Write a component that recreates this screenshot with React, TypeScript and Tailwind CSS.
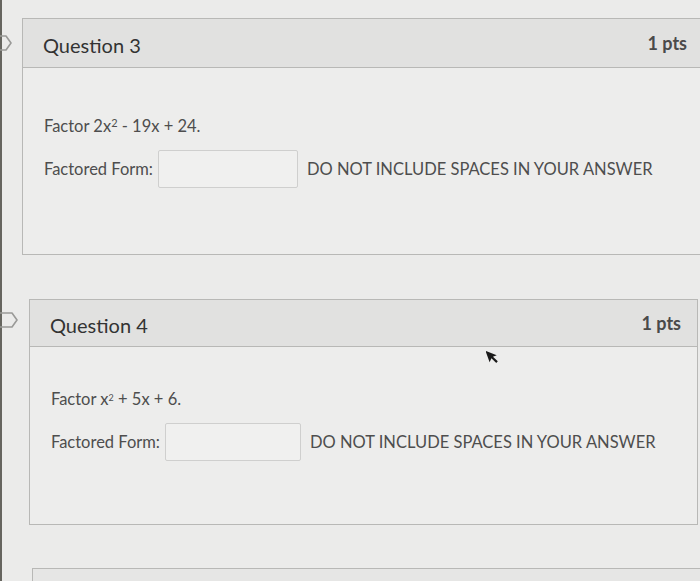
import { ReactNode } from "react";

// Small outline "flag" tag that sits in the left gutter of each question
function FlagTag() {
  return (
    <svg width="20" height="18" viewBox="0 0 20 18" fill="none" className="shrink-0">
      <path
        d="M-4 2 H12 L17 9 L12 16 H-4"
        stroke="#9a9a98"
        strokeWidth="1.6"
        strokeLinejoin="round"
      />
    </svg>
  );
}

interface QuestionProps {
  title: string;
  prompt: ReactNode;
  offset: string;
  cardWidth: string;
  headerH: string;
  headerPr: string;
  bodyH: string;
  bodyPt: string;
  inputW: string;
  flagTop: string;
}

function Question({
  title,
  prompt,
  offset,
  cardWidth,
  headerH,
  headerPr,
  bodyH,
  bodyPt,
  inputW,
  flagTop,
}: QuestionProps) {
  return (
    <div className="flex shrink-0">
      <div className={`${offset} shrink-0 flex flex-col`}>
        <div className={flagTop}>
          <FlagTag />
        </div>
      </div>
      <div className={`${cardWidth} shrink-0 border border-[#b8b8b6] bg-[#ededec]`}>
        <div
          className={`${headerH} ${headerPr} flex items-center justify-between pl-[20px] bg-[#e1e1e0] border-b border-[#b8b8b6]`}
        >
          <span className="text-[20px] text-[#333] mt-[4px]">{title}</span>
          <span className="text-[18px] font-bold text-[#4a4a4a]">1 pts</span>
        </div>
        <div className={`${bodyH} ${bodyPt} pl-[21px] text-[16.5px] text-[#4e4e4e]`}>
          <div className="leading-[20px]">{prompt}</div>
          <div className="flex items-center mt-[14px]">
            <span>Factored Form:</span>
            <div className={`${inputW} h-[38px] ml-[5px] mr-[9px] border border-[#cfcfce] bg-[#f0f0ef] rounded-[2px]`} />
            <span>DO NOT INCLUDE SPACES IN YOUR ANSWER</span>
          </div>
        </div>
      </div>
    </div>
  );
}

export default function App() {
  return (
    <div
      className="relative w-[700px] h-[581px] overflow-hidden bg-[#ebebea] flex"
      style={{ fontFamily: "Lato, 'Open Sans', sans-serif" }}
    >
      <div className="w-[2px] shrink-0 bg-[#66655f]" />
      <div className="flex-1 flex flex-col pt-[18px]">
        <Question
          title="Question 3"
          prompt={
            <>
              Factor 2x<sup className="text-[11px]">2</sup> - 19x + 24.
            </>
          }
          offset="w-[20px]"
          cardWidth="w-[686px]"
          headerH="h-[49px]"
          headerPr="pr-[20px]"
          bodyH="h-[186px]"
          bodyPt="pt-[48px]"
          inputW="w-[140px]"
          flagTop="mt-[16px] -ml-[8px]"
        />
        <div className="h-[44px] shrink-0" />
        <Question
          title="Question 4"
          prompt={
            <>
              Factor x<sup className="text-[9px]">2</sup> + 5x + 6.
            </>
          }
          offset="w-[27px]"
          cardWidth="w-[669px]"
          headerH="h-[47px]"
          headerPr="pr-[16px]"
          bodyH="h-[177px]"
          bodyPt="pt-[42px]"
          inputW="w-[136px]"
          flagTop="mt-[12px] -ml-[2px]"
        />
        <div className="h-[43px] shrink-0" />
        <div className="flex shrink-0">
          <div className="w-[30px] shrink-0" />
          <div className="w-[680px] h-[40px] border border-[#b8b8b6] bg-[#e6e6e5]" />
        </div>
      </div>

      {/* mouse pointer */}
      <svg
        className="absolute left-[486px] top-[348px]"
        width="14"
        height="18"
        viewBox="0 0 14 18"
      >
        <path d="M2 1 L2 13 L5 10 L8 16 L10 15 L7 9 L11 9 Z" fill="#1a1a1a" transform="rotate(-20 6 9)" />
      </svg>
    </div>
  );
}
